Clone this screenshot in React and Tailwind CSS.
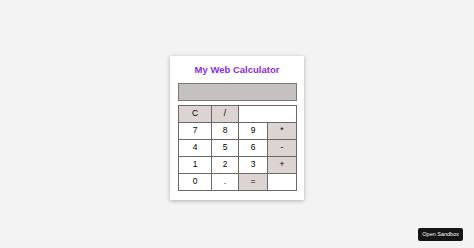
const rows = [
  [
    { label: 'C', op: true },
    { label: '/', op: true },
    { label: '', span: 2 },
  ],
  [{ label: '7' }, { label: '8' }, { label: '9' }, { label: '*', op: true }],
  [{ label: '4' }, { label: '5' }, { label: '6' }, { label: '-', op: true }],
  [{ label: '1' }, { label: '2' }, { label: '3' }, { label: '+', op: true }],
  [{ label: '0' }, { label: '.' }, { label: '=', op: true }, { label: '' }],
];

const App = () => {
  return (
    <div className="relative w-full h-screen bg-[#f3f3f3] flex justify-center pt-[56px] font-['Liberation_Sans',Arial,sans-serif]">
      <div className="w-[134px] h-[144px] bg-white shadow-[0_1px_4px_rgba(0,0,0,0.28)] flex flex-col items-start px-[8px]">
        <h1 className="w-full text-center text-[9.5px] font-bold text-[#8a2be2] leading-none mt-[9px]">
          My Web Calculator
        </h1>
        <div className="mt-[8px] w-[119px] h-[18px] bg-[#c5c1c1] border-[1.5px] border-[#7a7777]" />
        <table className="mt-[4px] border-collapse table-fixed w-[118px]">
          <colgroup>
            <col className="w-[33px]" />
            <col className="w-[27px]" />
            <col className="w-[29px]" />
            <col className="w-[29px]" />
          </colgroup>
          <tbody>
            {rows.map((row, i) => (
              <tr key={i} className="h-[17px]">
                {row.map((cell, j) => (
                  <td
                    key={j}
                    colSpan={cell.span || 1}
                    className={`border border-[#6b6868] text-center text-[8.5px] leading-none text-black p-0 ${
                      cell.op ? 'bg-[#dcd3d3]' : 'bg-white'
                    }`}
                  >
                    {cell.label}
                  </td>
                ))}
              </tr>
            ))}
          </tbody>
        </table>
      </div>
      <button className="absolute right-[11px] bottom-[7px] h-[13px] px-[4px] rounded-[2px] bg-[#151515] text-white text-[5.5px] leading-none font-['Liberation_Sans',Arial,sans-serif]">
        Open Sandbox
      </button>
    </div>
  );
};

export default App;
